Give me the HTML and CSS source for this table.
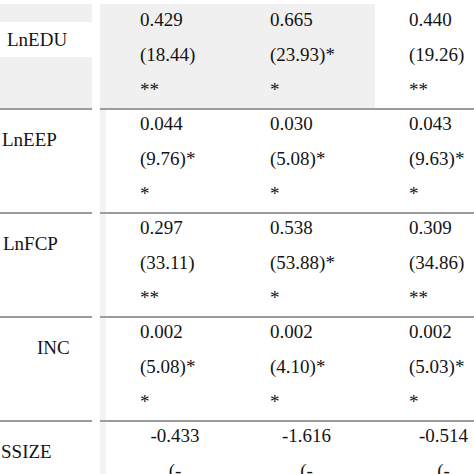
FILE: index.html
```html
<!DOCTYPE html>
<html>
<head>
<meta charset="utf-8">
<link rel="stylesheet" href="styles.css">
</head>
<body>
<div class="table">
  <div class="row r1">
    <div class="lab lab1">
      <div class="gtop"></div>
      <div class="lband">LnEDU</div>
      <div class="gbot"></div>
    </div>
    <div class="cell c2 gray"><div class="v">0.429<br>(18.44)<br>**</div></div>
    <div class="cell c3 gray"><div class="v">0.665<br>(23.93)*<br>*</div></div>
    <div class="cell c4"><div class="v">0.440<br>(19.26)<br>**</div></div>
  </div>
  <div class="row">
    <div class="lab pl2">LnEEP</div>
    <div class="cell c2"><div class="v">0.044<br>(9.76)*<br>*</div></div>
    <div class="cell c3"><div class="v">0.030<br>(5.08)*<br>*</div></div>
    <div class="cell c4"><div class="v">0.043<br>(9.63)*<br>*</div></div>
  </div>
  <div class="row">
    <div class="lab pl3">LnFCP</div>
    <div class="cell c2"><div class="v">0.297<br>(33.11)<br>**</div></div>
    <div class="cell c3"><div class="v">0.538<br>(53.88)*<br>*</div></div>
    <div class="cell c4"><div class="v">0.309<br>(34.86)<br>**</div></div>
  </div>
  <div class="row">
    <div class="lab pl37">INC</div>
    <div class="cell c2"><div class="v">0.002<br>(5.08)*<br>*</div></div>
    <div class="cell c3"><div class="v">0.002<br>(4.10)*<br>*</div></div>
    <div class="cell c4"><div class="v">0.002<br>(5.03)*<br>*</div></div>
  </div>
  <div class="row last">
    <div class="lab pl1">SSIZE</div>
    <div class="cell c2 ctr"><div class="v">-0.433<br>(-</div></div>
    <div class="cell c3 ctr"><div class="v">-1.616<br>(-</div></div>
    <div class="cell c4 ctr"><div class="v">-0.514<br>(-</div></div>
  </div>
</div>
</body>
</html>
```
FILE: styles.css
```css
html, body {
  margin: 0;
  padding: 0;
  background: #fff;
}
body {
  width: 474px;
  height: 474px;
  overflow: hidden;
  font-family: "Liberation Serif", "DejaVu Serif", serif;
  font-size: 19px;
  line-height: 35px;
  color: #141414;
}
.table {
  display: flex;
  flex-direction: column;
  width: 520px;
}
.row {
  display: flex;
  height: 103px;
}
.row + .row {
  height: 104px;
}
.row.r1 {
  height: 108px;
}
.row.last {
  height: 60px;
}
.lab {
  width: 92px;
  flex: none;
  margin-right: 8px;
  padding-top: 12px;
  box-sizing: border-box;
  white-space: nowrap;
}
.pl1 { padding-left: 1px; }
.pl2 { padding-left: 2px; }
.pl3 { padding-left: 3px; }
.pl37 { padding-left: 37px; }
.row + .row .lab,
.row + .row .cell {
  border-top: 2px solid #9c9c9c;
}
.lab1 {
  padding: 0;
  display: flex;
  flex-direction: column;
}
.gtop {
  height: 18px;
  margin-top: 4px;
  background: #f0f0f0;
}
.lband {
  height: 35px;
  padding-left: 7px;
}
.gbot {
  flex: 1;
  background: #f0f0f0;
}
.cell {
  flex: none;
  box-sizing: border-box;
  white-space: nowrap;
  overflow: hidden;
}
.r1 .cell {
  padding-top: 2px;
}
.row + .row .v {
  margin-top: -4px;
}
.c2 { width: 138px; padding-left: 40px; }
.c3 { width: 137px; padding-left: 32px; }
.c4 { width: 137px; padding-left: 34px; }
.row + .row .c2 {
  box-shadow: inset 6px 0 #f3f3f3;
}
.gray {
  background: linear-gradient(to bottom, #fff 0, #fff 4px, #f0f0f0 4px);
}
.ctr {
  text-align: center;
}
.c2.ctr { padding-left: 12px; }
.c3.ctr { padding-left: 0; }
.c4.ctr { padding-left: 0; }
```
